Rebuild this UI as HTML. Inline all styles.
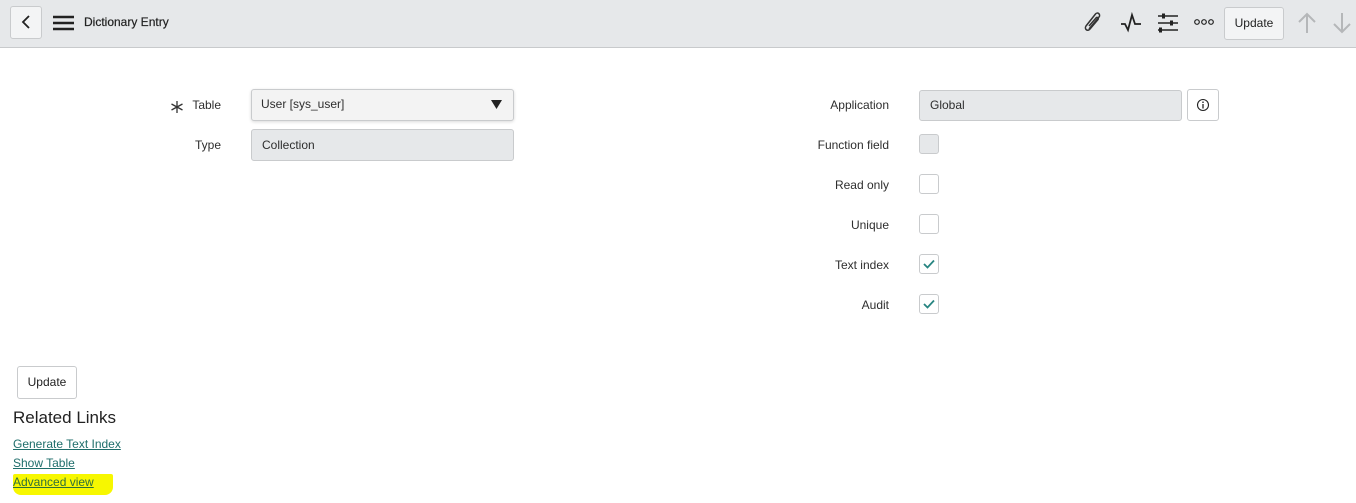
<!DOCTYPE html>
<html><head><style>
*{box-sizing:border-box;margin:0;padding:0}
body{width:1356px;height:503px;background:#fff;font-family:"Liberation Sans",sans-serif;font-size:12px;color:#2e2e2e;position:relative;overflow:hidden}
.a{position:absolute}
.hdr{left:0;top:0;width:1356px;height:48px;background:#e6e8ea;border-bottom:1px solid #c8cacc}
.btn{background:#f3f4f5;border:1px solid #c9cbcd;border-radius:3px}
.lbl{text-align:right;width:160px;line-height:20px}
.fld{border:1px solid #c9cbcd;border-radius:3px;background:#e6e8ea;padding-left:10px;line-height:29px}
.cb{width:20px;height:20px;border:1px solid #c9cbcd;border-radius:3px;background:#fff}
.lnk{color:#1f6e6b;text-decoration:underline;font-size:12px}
</style></head><body>
<div class="a hdr"></div>
<div class="a btn" style="left:10px;top:6px;width:32px;height:33px"></div>
<svg class="a" style="left:18px;top:13px" width="16" height="18"><path d="M11 3 L5 9 L11 15" stroke="#222" stroke-width="1.8" fill="none"/></svg>
<svg class="a" style="left:53px;top:14px" width="21" height="18"><path d="M0 3H21M0 9H21M0 15H21" stroke="#222" stroke-width="2.6"/></svg>
<div class="a" style="left:84px;top:15px;font-size:12px;color:#222;-webkit-text-stroke:0.2px #222">Dictionary Entry</div>
<svg class="a" style="left:1082px;top:10px" width="24" height="24"><path d="M7 19 L17 7 C19 4.5 15.5 1.5 13.5 4 L4 16 C2 19 5.5 22 8 19 L16 9.5 C17 8 15 6.5 14 8 L7 16" stroke="#333" stroke-width="1.5" fill="none"/></svg>
<svg class="a" style="left:1120px;top:11px" width="22" height="22"><path d="M1 13H5L8 19L12 4L15 13H21" stroke="#222" stroke-width="1.8" fill="none"/></svg>
<svg class="a" style="left:1157px;top:12px" width="22" height="22"><path d="M1 4H21M1 11H21M1 18H21" stroke="#222" stroke-width="1.6"/><rect x="5" y="1.5" width="3" height="5" fill="#222"/><rect x="13" y="8.5" width="3" height="5" fill="#222"/><rect x="2" y="15.5" width="3" height="5" fill="#222"/></svg>
<svg class="a" style="left:1194px;top:18px" width="22" height="8"><circle cx="3" cy="4" r="2.3" stroke="#222" stroke-width="1.2" fill="none"/><circle cx="10" cy="4" r="2.3" stroke="#222" stroke-width="1.2" fill="none"/><circle cx="17" cy="4" r="2.3" stroke="#222" stroke-width="1.2" fill="none"/></svg>
<div class="a btn" style="left:1224px;top:7px;width:60px;height:33px;text-align:center;line-height:31px;color:#222">Update</div>
<svg class="a" style="left:1297px;top:12px" width="20" height="22"><path d="M10 21V2M2 10L10 2L18 10" stroke="#b5b7b9" stroke-width="2" fill="none"/></svg>
<svg class="a" style="left:1332px;top:12px" width="20" height="22"><path d="M10 1V20M2 12L10 20L18 12" stroke="#b5b7b9" stroke-width="2" fill="none"/></svg>

<svg class="a" style="left:170px;top:100px" width="14" height="14"><path d="M7 1V13M1.5 4L12.5 10M1.5 10L12.5 4" stroke="#333" stroke-width="1.3"/></svg>
<div class="a lbl" style="left:61px;top:95px">Table</div>
<div class="a" style="left:251px;top:89px;width:263px;height:32px;border:1px solid #c9cbcd;border-radius:3px;background:#f3f3f3;box-shadow:0 1px 3px rgba(0,0,0,.15);padding-left:9px;line-height:29px">User [sys_user]</div>
<svg class="a" style="left:491px;top:100px" width="12" height="10"><path d="M0 0H11L5.5 9Z" fill="#222"/></svg>
<div class="a lbl" style="left:61px;top:135px">Type</div>
<div class="a fld" style="left:251px;top:129px;width:263px;height:32px;line-height:31px">Collection</div>

<div class="a lbl" style="left:729px;top:95px">Application</div>
<div class="a fld" style="left:919px;top:90px;width:263px;height:31px">Global</div>
<div class="a" style="left:1187px;top:89px;width:32px;height:32px;border:1px solid #c9cbcd;border-radius:3px;background:#fff"></div>
<svg class="a" style="left:1196px;top:98px" width="14" height="14"><circle cx="7" cy="7" r="5.5" stroke="#222" stroke-width="1.1" fill="none"/><path d="M7 6V10.5" stroke="#222" stroke-width="1.3"/><circle cx="7" cy="4.2" r=".8" fill="#222"/></svg>
<div class="a lbl" style="left:729px;top:135px">Function field</div>
<div class="a cb" style="left:919px;top:134px;background:#e6e8ea"></div>
<div class="a lbl" style="left:729px;top:175px">Read only</div>
<div class="a cb" style="left:919px;top:174px"></div>
<div class="a lbl" style="left:729px;top:215px">Unique</div>
<div class="a cb" style="left:919px;top:214px"></div>
<div class="a lbl" style="left:729px;top:255px">Text index</div>
<div class="a cb" style="left:919px;top:254px"></div>
<svg class="a" style="left:922px;top:257px" width="14" height="14"><path d="M2 7L5.5 10.5L12 3.5" stroke="#278581" stroke-width="1.8" fill="none"/></svg>
<div class="a lbl" style="left:729px;top:295px">Audit</div>
<div class="a cb" style="left:919px;top:294px"></div>
<svg class="a" style="left:922px;top:297px" width="14" height="14"><path d="M2 7L5.5 10.5L12 3.5" stroke="#278581" stroke-width="1.8" fill="none"/></svg>

<div class="a" style="left:17px;top:366px;width:60px;height:33px;border:1px solid #c9cbcd;border-radius:3px;background:#fff;text-align:center;line-height:31px;color:#222">Update</div>
<div class="a" style="left:13px;top:408px;font-size:17px;color:#222">Related Links</div>
<div class="a" style="left:13px;top:474px;width:100px;height:21px;background:#f7f700;border-radius:2px 2px 8px 8px"></div>
<div class="a lnk" style="left:13px;top:437px">Generate Text Index</div>
<div class="a lnk" style="left:13px;top:456px">Show Table</div>
<div class="a lnk" style="left:13px;top:475px;color:#2f6f3a">Advanced view</div>
</body></html>
